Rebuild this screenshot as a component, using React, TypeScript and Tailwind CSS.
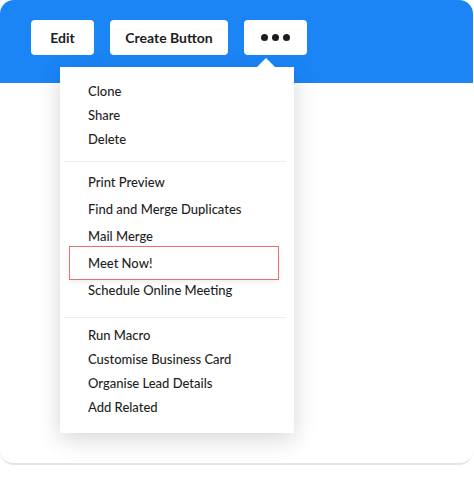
import React from "react";

const groups: string[][] = [
  ["Clone", "Share", "Delete"],
  ["Print Preview", "Find and Merge Duplicates", "Mail Merge", "Meet Now!", "Schedule Online Meeting"],
  ["Run Macro", "Customise Business Card", "Organise Lead Details", "Add Related"],
];

function TopButton({ children, className = "" }: { children: React.ReactNode; className?: string }) {
  return (
    <button
      className={`flex h-[35px] items-center justify-center rounded-[4px] bg-white text-[14px] font-bold text-[#1d1d1f] ${className}`}
    >
      {children}
    </button>
  );
}

export default function App() {
  return (
    <div className="h-[477px] w-[474px] bg-white" style={{ fontFamily: "Lato, 'Open Sans', sans-serif" }}>
      <div className="relative h-[465px] w-[473px] rounded-[14px] border-b-2 border-[#e1e5f0] bg-white">
        <div className="flex h-[83px] gap-[16px] rounded-t-[14px] bg-[#1b85f6] pl-[31px] pt-[20px]">
          <TopButton className="w-[63px]">Edit</TopButton>
          <TopButton className="w-[118px]">Create Button</TopButton>
          <TopButton className="w-[63px] gap-[4px]">
            <span className="h-[7px] w-[7px] rounded-full bg-[#1d1d1f]" />
            <span className="h-[7px] w-[7px] rounded-full bg-[#1d1d1f]" />
            <span className="h-[7px] w-[7px] rounded-full bg-[#1d1d1f]" />
          </TopButton>
        </div>

        <div className="absolute left-[60px] top-[67px] h-[366px] w-[234px] bg-white pt-[13px] shadow-[0_6px_22px_rgba(0,0,0,0.16)]">
          <div className="absolute left-[197px] top-[-9px] h-0 w-0 border-b-[9px] border-l-[9px] border-r-[9px] border-b-white border-l-transparent border-r-transparent" />
          {groups.map((items, gi) => (
            <div key={gi}>
              {gi > 0 && (
                <div
                  className={`ml-[4px] mr-[8px] h-px bg-[#ececec] ${gi === 1 ? "mb-[7px] mt-[9px]" : "mb-[6px] mt-[13px]"}`}
                />
              )}
              {items.map((item) => (
                <div
                  key={item}
                  className={`relative flex items-center pl-[28px] text-[13px] font-medium text-[#1f1f1f] ${gi === 1 ? "h-[27px]" : "h-[24px]"}`}
                >
                  {item === "Meet Now!" && (
                    <span className="absolute bottom-[-3px] left-[9px] right-[15px] top-[-4px] border border-[#e27373] shadow-[0_2px_6px_rgba(0,0,0,0.08)]" />
                  )}
                  <span className="relative">{item}</span>
                </div>
              ))}
            </div>
          ))}
        </div>
      </div>
    </div>
  );
}
